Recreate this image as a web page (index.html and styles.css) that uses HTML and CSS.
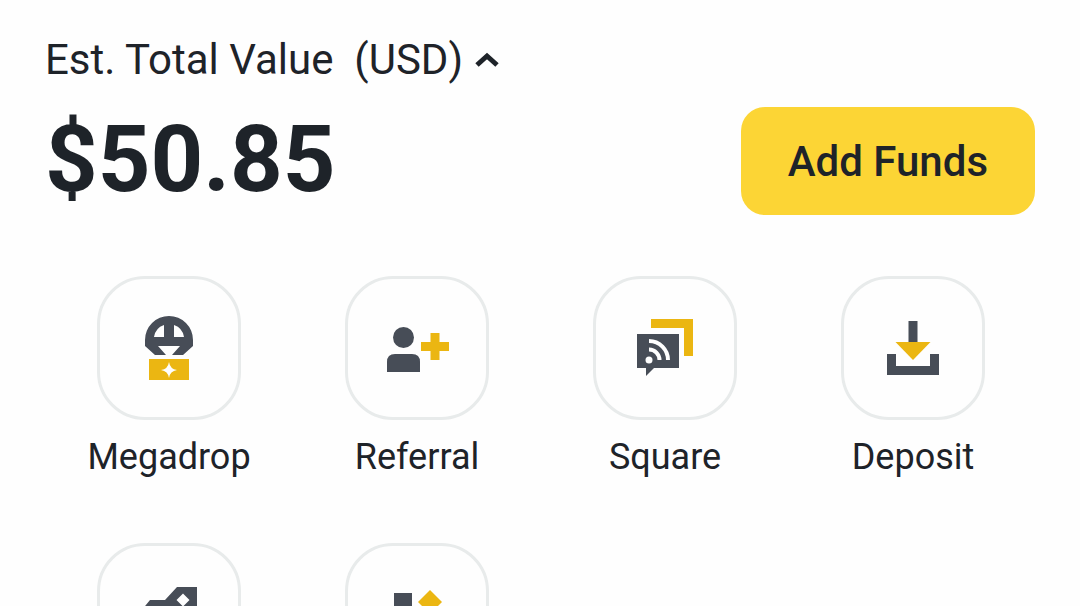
FILE: index.html
```html
<!DOCTYPE html>
<html lang="en">
  <head>
    <meta charset="utf-8">
    <title>Wallet</title>
    <meta name="viewport" content="width=device-width, initial-scale=1">
    <link rel="stylesheet" href="styles.css">
  </head>
  <body>
    <main class="wallet">
      <header class="balance">
        <div class="balance-info">
          <button class="balance-toggle" type="button">
            <span>Est. Total Value&nbsp; (USD)</span>
            <svg class="chevron" viewBox="0 0 24 16"><path d="M2 13L12 4l10 9" fill="none" stroke="currentColor" stroke-width="5"/></svg>
          </button>
          <div class="balance-amount">$50.85</div>
        </div>
        <button class="add-funds" type="button">Add Funds</button>
      </header>
      <nav class="shortcuts">
        <a class="shortcut" href="#megadrop">
          <span class="tile">
            <svg class="icon" viewBox="0 0 72 72">
              <path class="dark" fill-rule="evenodd" d="M12 34V28a24 24 0 0 1 48 0v6L50 43H39l8-9H25l8 9H22zM31 13a15 15 0 0 0-10 12h10zM41 13v12h10a15 15 0 0 0-10-12z"/>
              <path class="gold" fill-rule="evenodd" d="M16 47h40v21H16zM36 50q1 7 8 8q-7 1-8 8q-1-7-8-8q7-1 8-8z"/>
            </svg>
          </span>
          <span class="shortcut-name">Megadrop</span>
        </a>
        <a class="shortcut" href="#referral">
          <span class="tile">
            <svg class="icon" viewBox="0 0 72 72">
              <circle class="dark" cx="22.5" cy="25.5" r="10.5"/>
              <path class="dark" d="M6 60V50q0-8 8-8h17q8 0 8 8v10z"/>
              <path class="gold" d="M49.500 21h9v9H68v9h-9.500v9h-9v-9H40v-9h9.500z"/>
            </svg>
          </span>
          <span class="shortcut-name">Referral</span>
        </a>
        <a class="shortcut" href="#square">
          <span class="tile">
            <svg class="icon" viewBox="0 0 72 72">
              <path class="gold" d="M22 7h42v37h-9V16H22z"/>
              <path class="dark" d="M8 22h42v34H25l-8 8v-8H8z"/>
              <circle class="light" cx="20" cy="48" r="3.5"/>
              <path class="wave" d="M20 29a19 19 0 0 1 19 19M20 37.500A10.500 10.500 0 0 1 30.500 48"/>
            </svg>
          </span>
          <span class="shortcut-name">Square</span>
        </a>
        <a class="shortcut" href="#deposit">
          <span class="tile">
            <svg class="icon" viewBox="0 0 72 72">
              <path class="dark" d="M31.500 9h9v22h-9zM10 42h9v12h34V42h9v21H10z"/>
              <path class="gold" d="M18.500 30h35L36 48z"/>
            </svg>
          </span>
          <span class="shortcut-name">Deposit</span>
        </a>
        <a class="shortcut" href="#launchpad" aria-label="Launchpad">
          <span class="tile">
            <svg class="icon" viewBox="0 0 72 72">
              <path class="dark" fill-rule="evenodd" d="M44 8h20v20L51 41v13L40 64V50L22 32H8l9-11h15zM50 14.500l-6.500 6.500l6.500 6.500l6.500-6.500z"/>
              <path class="gold" d="M18 42l12 12l-6 6H12V48z"/>
            </svg>
          </span>
        </a>
        <a class="shortcut" href="#more" aria-label="More">
          <span class="tile">
            <svg class="icon" viewBox="0 0 72 72">
              <path class="dark" d="M13 14h18v18H13zM13 40h18v18H13zM40 40h18v18H40z"/>
              <path class="gold" d="M49 11l12 12l-12 12l-12-12z"/>
            </svg>
          </span>
        </a>
      </nav>
    </main>
  </body>
</html>
```
FILE: styles.css
```css
* {box-sizing: border-box;}
body {margin: 0; background-color: #fefefe; color: #1e2329; font-family: Roboto, "Liberation Sans", sans-serif;}
button {border: 0; padding: 0; background: none; color: inherit; font-family: inherit; cursor: pointer;}
.wallet {height: 100vh; overflow: hidden; padding-top: 36px;}
.balance {display: flex; justify-content: space-between; align-items: flex-end; padding: 0 45px 61px;}
.balance-toggle {display: flex; align-items: center; gap: 12px; font-size: 42px; line-height: 48px;}
.chevron {width: 24px; height: 16px;}
.balance-amount {padding-top: 20px; font-size: 92px; line-height: 111px; font-weight: bold;}
.add-funds {height: 108px; padding: 0 47px; border-radius: 24px; background-color: #fcd535; font-size: 42px; font-weight: 500;}
.shortcuts {display: grid; grid-template-columns: repeat(4, 1fr); row-gap: 62px; padding: 0 43px 0 45px;}
.shortcut {display: flex; flex-direction: column; align-items: center; gap: 13px; color: inherit; text-decoration: none;}
.tile {display: flex; align-items: center; justify-content: center; width: 144px; height: 144px; border: 3px solid #e8ebeb; border-radius: 48px;}
.icon {width: 72px; height: 72px;}
.shortcut-name {font-size: 36px; line-height: 48px;}
.dark {fill: #474d57;}
.gold {fill: #ebb612;}
.light {fill: #fefefe;}
.wave {fill: none; stroke: #fefefe; stroke-width: 4;}
```
